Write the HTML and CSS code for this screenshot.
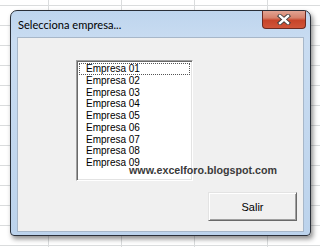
FILE: index.html
```html
<!DOCTYPE html>
<html>
<head>
<meta charset="utf-8">
<link rel="stylesheet" href="styles.css">
</head>
<body>
<div class="desk">
  <div class="window">
    <div class="titlebar">
      <span class="title">Selecciona empresa...</span>
      <div class="close">
        <svg width="14" height="11" viewBox="0 0 14 11">
          <path d="M3 2 L11 9 M11 2 L3 9" stroke="#3a3a3a" stroke-width="4.2" stroke-linecap="square"/>
          <path d="M3 2 L11 9 M11 2 L3 9" stroke="#ffffff" stroke-width="2.4" stroke-linecap="square"/>
        </svg>
      </div>
    </div>
    <div class="client">
      <div class="listbox">
        <div class="item focus">Empresa 01</div>
        <div class="item">Empresa 02</div>
        <div class="item">Empresa 03</div>
        <div class="item">Empresa 04</div>
        <div class="item">Empresa 05</div>
        <div class="item">Empresa 06</div>
        <div class="item">Empresa 07</div>
        <div class="item">Empresa 08</div>
        <div class="item">Empresa 09</div>
      </div>
      <div class="btn">Salir</div>
      <div class="watermark">www.excelforo.blogspot.com</div>
    </div>
  </div>
</div>
</body>
</html>
```
FILE: styles.css
```css
html, body {
  margin: 0;
  padding: 0;
}
body {
  width: 320px;
  height: 247px;
  overflow: hidden;
  background-color: #ffffff;
  background-image:
    repeating-linear-gradient(to right, transparent 0, transparent 48px, #dadcdd 48px, #dadcdd 49px, transparent 49px, transparent 73px),
    repeating-linear-gradient(to bottom, transparent 0, transparent 5px, #dadcdd 5px, #dadcdd 6px, transparent 6px, transparent 20px);
  background-size: 73px 100%, 100% 20px;
}
.desk {
  padding: 10px 0 0 10px;
}
.window {
  width: 301px;
  height: 226px;
  box-sizing: border-box;
  border: 1px solid #2a2f38;
  border-radius: 7px 7px 4px 4px;
  background: linear-gradient(to bottom, #bed5ee 0, #c9dcf1 30px, #bcd3ec 100%);
  box-shadow: 2px 3px 5px rgba(0,0,0,0.45);
  display: flex;
  flex-direction: column;
  padding: 0 6px 3px 6px;
}
.titlebar {
  height: 26px;
  display: flex;
  align-items: flex-start;
}
.title {
  font-family: Lato, "Noto Sans", sans-serif;
  font-size: 11.1px;
  color: #000;
  margin-left: 1px;
  margin-top: 6px;
  line-height: 16px;
}
.close {
  margin-left: auto;
  margin-right: -2px;
  width: 44px;
  height: 18px;
  box-sizing: border-box;
  border: 1px solid #6b2a22;
  border-top: none;
  border-radius: 0 0 4px 4px;
  background: linear-gradient(to bottom, #e2a493 0, #d6826c 40%, #c7442a 55%, #d0553a 100%);
  display: flex;
  align-items: center;
  justify-content: center;
}
.client {
  position: relative;
  flex: 1;
  background: #f0f0f0;
  border: 1px solid #a7b7c9;
  box-sizing: border-box;
  padding: 22px 0 0 58px;
}
.listbox {
  width: 117px;
  height: 121px;
  box-sizing: border-box;
  background: #fff;
  border: 1px solid;
  border-color: #a0a0a0 #ffffff #ffffff #a0a0a0;
  box-shadow: inset 1px 1px 0 #696969, inset -1px -1px 0 #e3e3e3;
  padding: 2px 2px 0 2px;
  font-family: "Liberation Sans", Arial, sans-serif;
  font-size: 10px;
  color: #000;
}
.item {
  height: 11.75px;
  line-height: 11.75px;
  padding-left: 7px;
  white-space: nowrap;
  box-sizing: border-box;
}
.item.focus {
  outline: 1px dotted #555;
  outline-offset: -1px;
}
.btn {
  margin: 11px 0 0 132px;
  width: 89px;
  height: 29px;
  box-sizing: border-box;
  background: #f0f0f0;
  border: 1px solid;
  border-color: #e3e3e3 #696969 #696969 #e3e3e3;
  box-shadow: inset 1px 1px 0 #ffffff, inset -1px -1px 0 #a0a0a0;
  font-family: "Liberation Sans", Arial, sans-serif;
  font-size: 11px;
  color: #000;
  display: flex;
  align-items: center;
  justify-content: center;
}
.watermark {
  position: absolute;
  left: 111px;
  top: 126px;
  font-family: "Liberation Sans", Arial, sans-serif;
  font-weight: bold;
  font-size: 10.7px;
  color: #3a3a3a;
  white-space: nowrap;
}
```
